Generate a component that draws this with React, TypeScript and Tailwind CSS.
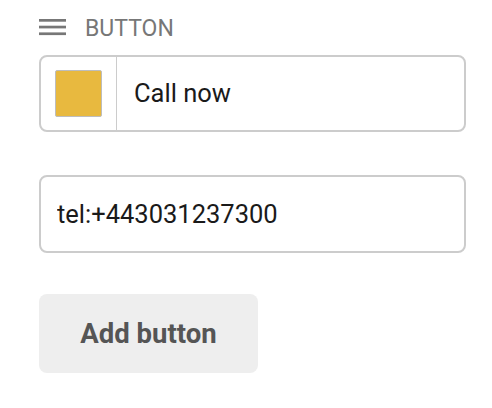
import { useState } from 'react'

const FONT = { fontFamily: 'Roboto, "Noto Sans", sans-serif' }

function MenuIcon() {
  return (
    <svg width="28" height="18" viewBox="0 0 28 18" className="shrink-0">
      <rect x="0" y="0" width="27" height="2.7" fill="#777" />
      <rect x="0" y="6.7" width="27" height="2.7" fill="#777" />
      <rect x="0" y="13.4" width="27" height="2.7" fill="#777" />
    </svg>
  )
}

export default function App() {
  const [label, setLabel] = useState('Call now')
  const [link, setLink] = useState('tel:+443031237300')

  return (
    <div className="min-h-screen bg-white px-[39px] pt-[12px]" style={FONT}>
      {/* header */}
      <div className="flex h-[32px] items-center gap-[18px]">
        <MenuIcon />
        <span className="text-[23px] leading-none text-[#777777]">BUTTON</span>
      </div>

      {/* label field with colour swatch */}
      <div className="mt-[11px] flex h-[77px] w-[427px] overflow-hidden rounded-[8px] border-2 border-[#cccccc]">
        <div className="flex w-[76px] shrink-0 items-center justify-center border-r-[1.5px] border-[#cccccc]">
          <div className="h-[47px] w-[47px] rounded-[2px] border border-[#bdbdbd] bg-[#e8b93f]" />
        </div>
        <input
          value={label}
          onChange={e => setLabel(e.target.value)}
          className="min-w-0 flex-1 bg-transparent pl-[17px] text-[25.5px] text-[#1a1a1a] outline-none"
        />
      </div>

      {/* link field */}
      <div className="mt-[43px] flex h-[78px] w-[427px] items-center rounded-[8px] border-2 border-[#cccccc]">
        <input
          value={link}
          onChange={e => setLink(e.target.value)}
          className="min-w-0 flex-1 bg-transparent pl-[16px] text-[25.5px] text-[#1a1a1a] outline-none"
        />
      </div>

      <button className="mt-[41px] flex h-[79px] w-[219px] items-center justify-center rounded-[8px] bg-[#eeeeee] text-[27.5px] font-bold text-[#555555]">
        Add button
      </button>
    </div>
  )
}
